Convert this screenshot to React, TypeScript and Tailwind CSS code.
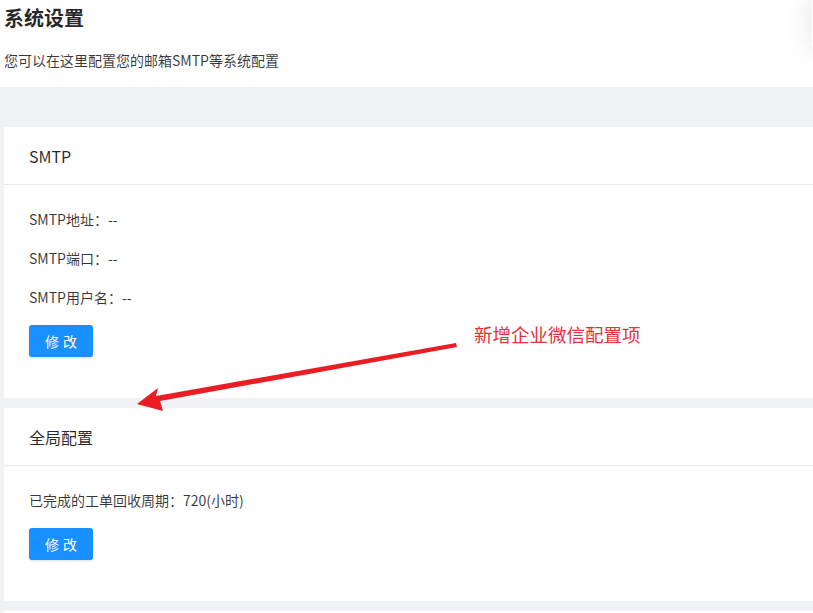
import React from "react";

const font = { fontFamily: '"Noto Sans CJK SC", "Noto Sans", sans-serif' };

function Card({ title, children }: { title: string; children: React.ReactNode }) {
  return (
    <div className="bg-white">
      <div className="h-[58px] flex items-center pl-[25px] text-[16px] text-[rgba(0,0,0,0.85)] border-b border-[#e8e8e8]">
        {title}
      </div>
      <div className="pl-[25px] pt-[23px] pb-[41px] text-[14px] text-[rgba(0,0,0,0.78)]">{children}</div>
    </div>
  );
}

function Btn() {
  return (
    <button className="w-[64px] h-[32px] rounded-[3px] bg-[#1890ff] text-white text-[14px] tracking-[4px] pl-[4px] shadow-sm">
      修改
    </button>
  );
}

export default function App() {
  return (
    <div className="relative w-[813px] h-[613px] overflow-hidden bg-[#f0f2f5]" style={font}>
      <div className="bg-white h-[87px] pl-[4px]">
        <div className="pt-[4px] text-[20px] font-bold leading-[28px] text-[rgba(0,0,0,0.85)]">系统设置</div>
        <div className="mt-[17px] text-[14px] leading-[22px] text-[rgba(0,0,0,0.78)]">您可以在这里配置您的邮箱SMTP等系统配置</div>
      </div>
      <div className="pl-[4px] pt-[40px] flex flex-col gap-[10px]">
        <Card title="SMTP">
          <div className="leading-[22px] mb-[17px]">SMTP地址：--</div>
          <div className="leading-[22px] mb-[17px]">SMTP端口：--</div>
          <div className="leading-[22px] mb-[17px]">SMTP用户名：--</div>
          <Btn />
        </Card>
        <Card title="全局配置">
          <div className="leading-[22px] mb-[17px]">已完成的工单回收周期：720(小时)</div>
          <Btn />
        </Card>
        <div className="bg-white h-[40px]" />
      </div>

      <div className="absolute top-0 left-[812px] w-[60px] h-[46px] bg-white shadow-[0_0_30px_rgba(0,0,0,0.12)]" />

      <div className="absolute left-[474px] top-[320px] text-[18.5px] leading-[28px] text-[#e8303a] whitespace-nowrap">
        新增企业微信配置项
      </div>
      <svg className="absolute left-0 top-0" width="813" height="613" viewBox="0 0 813 613">
        <polygon
          points="137,404 158,388 156,396 456,343 457,347 160,401 163,411"
          fill="#ea1c24"
        />
      </svg>
    </div>
  );
}
